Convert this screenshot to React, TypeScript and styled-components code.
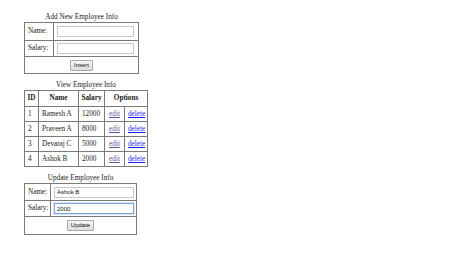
import React from "react"
import styled, { createGlobalStyle } from "styled-components"

const GlobalStyle = createGlobalStyle`
  html, body {
    margin: 0;
    padding: 0;
    background: #ffffff;
  }
  body {
    font-family: "Liberation Serif", "Times New Roman", serif;
    color: #1a1a1a;
  }
`

const Page = styled.div`
  display: flex;
  flex-direction: column;
  align-items: flex-start;
  gap: 6px;
  padding: 12px 0 0 24px;
`

interface TableProps {
  $width: number
}

const Table = styled.table<TableProps>`
  width: ${p => p.$width}px;
  table-layout: fixed;
  border-collapse: collapse;
  border: 1px solid #7a7a7a;
  font-size: 7.2px;
  line-height: 9px;
`

const Caption = styled.caption`
  caption-side: top;
  text-align: center;
  font-size: 7.2px;
  line-height: 10px;
  color: #222;
`

interface CellProps {
  $h?: number
  $center?: boolean
}

const Cell = styled.td<CellProps>`
  border: 1px solid #7a7a7a;
  height: ${p => p.$h ?? 15}px;
  padding: 0 3px;
  text-align: ${p => (p.$center ? "center" : "left")};
  vertical-align: middle;
  white-space: nowrap;
  overflow: hidden;
  box-sizing: border-box;
`

const HeadCell = styled.th<CellProps>`
  border: 1px solid #7a7a7a;
  height: ${p => p.$h ?? 15}px;
  padding: 0 2px;
  font-weight: bold;
  text-align: center;
  white-space: nowrap;
  box-sizing: border-box;
`

interface InputProps {
  $focused?: boolean
  $width: number
}

const TextInput = styled.input<InputProps>`
  display: block;
  box-sizing: border-box;
  width: ${p => p.$width}px;
  height: 11px;
  margin: 0;
  padding: 0 2px;
  font-family: "Liberation Sans", Arial, sans-serif;
  font-size: 6px;
  color: #111;
  background: #fff;
  border: 1px solid ${p => (p.$focused ? "#7fa6d6" : "#c8c8c8")};
  outline: none;
  ${p => p.$focused && "box-shadow: 0 0 0 1px #d6e5f5;"}
`

const Button = styled.button`
  font-family: "Liberation Sans", Arial, sans-serif;
  font-size: 6px;
  line-height: 7px;
  padding: 1px 3px;
  color: #111;
  background: linear-gradient(#f6f6f6, #dedede);
  border: 1px solid #a8a8a8;
  border-radius: 1px;
`

interface LinkProps {
  $visited?: boolean
}

const ActionLink = styled.a<LinkProps>`
  color: ${p => (p.$visited ? "#6b4f96" : "#1a1aee")};
  text-decoration: underline;
  cursor: pointer;
`

const employees = [
  { id: 1, name: "Ramesh A", salary: 12000 },
  { id: 2, name: "Praveen A", salary: 8000 },
  { id: 3, name: "Devaraj C", salary: 5000 },
  { id: 4, name: "Ashok B", salary: 2000 },
]

export default function App() {
  return (
    <>
      <GlobalStyle />
      <Page>
        <Table $width={115}>
          <Caption>Add New Employee Info</Caption>
          <colgroup>
            <col style={{ width: 29 }} />
            <col />
          </colgroup>
          <tbody>
            <tr>
              <Cell $h={18}>Name:</Cell>
              <Cell $h={18}><TextInput $width={77} /></Cell>
            </tr>
            <tr>
              <Cell $h={16}>Salary:</Cell>
              <Cell $h={16}><TextInput $width={77} /></Cell>
            </tr>
            <tr>
              <Cell $h={17} colSpan={2} $center><Button>Insert</Button></Cell>
            </tr>
          </tbody>
        </Table>

        <Table $width={124}>
          <Caption>View Employee Info</Caption>
          <colgroup>
            <col style={{ width: 14 }} />
            <col style={{ width: 40 }} />
            <col style={{ width: 26 }} />
            <col style={{ width: 20 }} />
            <col />
          </colgroup>
          <thead>
            <tr>
              <HeadCell $h={16}>ID</HeadCell>
              <HeadCell $h={16}>Name</HeadCell>
              <HeadCell $h={16}>Salary</HeadCell>
              <HeadCell $h={16} colSpan={2}>Options</HeadCell>
            </tr>
          </thead>
          <tbody>
            {employees.map(e => (
              <tr key={e.id}>
                <Cell>{e.id}</Cell>
                <Cell>{e.name}</Cell>
                <Cell>{e.salary}</Cell>
                <Cell $center><ActionLink $visited>edit</ActionLink></Cell>
                <Cell $center><ActionLink>delete</ActionLink></Cell>
              </tr>
            ))}
          </tbody>
        </Table>

        <Table $width={113}>
          <Caption>Update Employee Info</Caption>
          <colgroup>
            <col style={{ width: 26 }} />
            <col />
          </colgroup>
          <tbody>
            <tr>
              <Cell $h={17}>Name:</Cell>
              <Cell $h={17}><TextInput $width={80} defaultValue="Ashok B" /></Cell>
            </tr>
            <tr>
              <Cell $h={16}>Salary:</Cell>
              <Cell $h={16}><TextInput $width={80} $focused defaultValue="2000" /></Cell>
            </tr>
            <tr>
              <Cell $h={18} colSpan={2} $center><Button>Update</Button></Cell>
            </tr>
          </tbody>
        </Table>
      </Page>
    </>
  )
}
